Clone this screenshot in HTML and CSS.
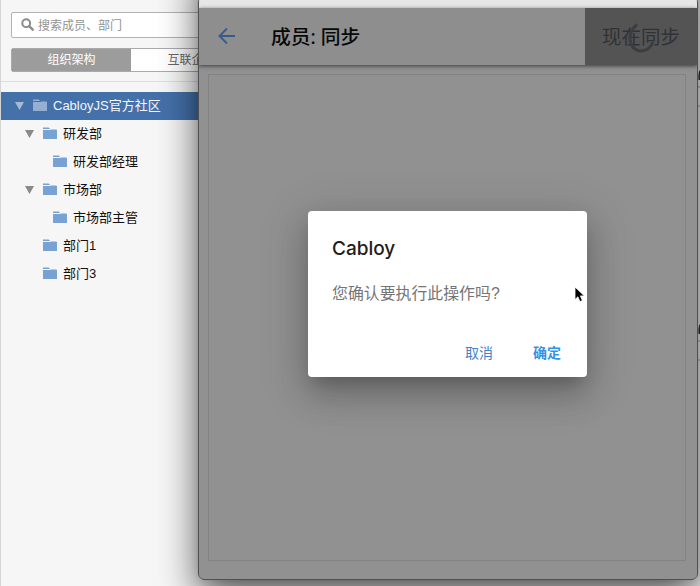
FILE: index.html
```html
<!DOCTYPE html>
<html lang="zh-CN">
<head>
<meta charset="utf-8">
<title>Cabloy</title>
<link rel="stylesheet" href="styles.css">
</head>
<body>
<svg class="defs" width="0" height="0">
  <symbol id="folder" viewBox="0 0 14 12"><path d="M0 .4h5.6l1.6 1.5H0zM0 3h7.2l1-.6H13q1 0 1 1V12H0z" fill="currentColor"/></symbol>
</svg>
<aside class="sidebar">
  <div class="search">
    <svg width="13" height="13" viewBox="0 0 13 13"><circle cx="5.2" cy="5.2" r="3.9" fill="none" stroke="#8b8b8b" stroke-width="2"/><path d="M8.2 8.2l3.5 3.5" stroke="#8b8b8b" stroke-width="2.4" stroke-linecap="round"/></svg>
    <span>搜索成员、部门</span>
  </div>
  <div class="tabs">
    <div class="tab active">组织架构</div>
    <div class="tab">互联企业</div>
  </div>
  <ul class="tree">
    <li class="root"><i class="arrow"></i><svg class="folder"><use href="#folder"/></svg><span>CabloyJS官方社区</span></li>
    <li class="level1"><i class="arrow"></i><svg class="folder"><use href="#folder"/></svg><span>研发部</span></li>
    <li class="level2"><svg class="folder"><use href="#folder"/></svg><span>研发部经理</span></li>
    <li class="level1"><i class="arrow"></i><svg class="folder"><use href="#folder"/></svg><span>市场部</span></li>
    <li class="level2"><svg class="folder"><use href="#folder"/></svg><span>市场部主管</span></li>
    <li class="leaf"><svg class="folder"><use href="#folder"/></svg><span>部门1</span></li>
    <li class="leaf"><svg class="folder"><use href="#folder"/></svg><span>部门3</span></li>
  </ul>
</aside>
<div class="edge"></div>
<svg class="peek" width="2" height="300" viewBox="0 0 2 300"><path d="M2 0Q0 2 .5 10H2zM2 254Q0 256 .5 264H2z" fill="#222"/><path d="M0 17h2M0 36h2M0 271h2M0 290h2" stroke="#666"/></svg>
<main class="window">
  <div class="titlebar"></div>
  <header class="navbar">
    <svg class="back" width="18" height="18" viewBox="0 0 18 18"><path d="M17 9H2M9 1.5L1.5 9 9 16.5" fill="none" stroke="#365c8a" stroke-width="1.8"/></svg>
    <h1>成员: 同步</h1>
    <button class="sync">现在同步
      <svg class="spinner" width="34" height="34" viewBox="0 0 34 34"><path d="M12 3.5Q4 10 5 19Q7 30 17 30Q25 29 28 21" fill="none" stroke="#3c3d3f" stroke-width="3"/></svg>
    </button>
  </header>
  <section class="content"><div class="card"></div></section>
</main>
<div class="dialog">
  <h2>Cabloy</h2>
  <p>您确认要执行此操作吗?</p>
  <div class="actions"><button>取消</button><button class="confirm">确定</button></div>
</div>
<svg class="cursor" width="12" height="18" viewBox="0 0 12 18"><path d="M1 1v12.5l2.9-2.7 2 4.8 2.5-1-2-4.7h4z" fill="#000" stroke="#fff" stroke-width=".8"/></svg>
</body>
</html>
```

FILE: styles.css
```css
* { box-sizing: border-box; }
body {
  margin: 0;
  position: relative;
  width: 700px;
  height: 586px;
  overflow: hidden;
  background: #f6f6f6;
  font-family: "Liberation Sans", "Noto Sans CJK SC", sans-serif;
  white-space: nowrap;
}
.defs { position: absolute; }
h1, h2, p, ul { margin: 0; padding: 0; }
button { padding: 0; border: 0; background: none; font: inherit; }
.sidebar { width: 262px; height: 586px; padding-top: 12px; border-left: 1px solid #d5d5d5; }
.search {
  display: flex;
  align-items: center;
  gap: 4px;
  height: 26px;
  margin-left: 10px;
  padding-left: 9px;
  border: 1px solid #b2b2b2;
  border-radius: 2px;
  background: #fff;
  color: #929292;
  font-size: 12px;
}
.search span { padding-bottom: 2px; }
.search svg { margin-bottom: 1px; }
.tabs {
  display: flex;
  height: 24px;
  margin: 10px 0 0 10px;
  border: 1px solid #aaa;
  border-radius: 2px;
  background: #fff;
}
.tab { flex: none; width: 121px; line-height: 23px; text-align: center; color: #686868; font-size: 12px; }
.tab.active { width: 119px; background: #9c9c9c; color: #fff; }
.tree { list-style: none; margin-top: 9px; padding-top: 10px; border-top: 1px solid #dedede; }
.tree li { display: flex; align-items: center; height: 28px; color: #111; font-size: 13px; }
.tree li span { padding-bottom: 4px; }
.tree .root span { padding-bottom: 3px; }
.tree .root { padding-left: 14px; background: #4471aa; color: #f3f6fa; }
.tree .level1 { padding-left: 24px; }
.tree .level2 { padding-left: 52px; }
.tree .leaf { padding-left: 42px; }
.arrow { width: 9px; height: 8px; margin-right: 9px; background: #898989; clip-path: polygon(0 0, 100% 0, 50% 100%); }
.root .arrow { background: #a5bad4; }
.folder { width: 14px; height: 12px; margin: 0 6px 2px 0; color: #78a2d3; }
.root .folder { color: #95afd2; }
.window {
  position: absolute;
  left: 198px;
  top: -4px;
  width: 500px;
  height: 584px;
  overflow: hidden;
  display: flex;
  flex-direction: column;
  border: 1px solid #505050;
  border-radius: 6px;
  background: #919191;
}
.edge {
  position: absolute;
  left: 198px;
  top: -40px;
  width: 500px;
  height: 620px;
  border-radius: 6px;
  box-shadow: 0 16px 38px rgba(0, 0, 0, .66), 0 0 6px rgba(0, 0, 0, .1);
}
.peek { position: absolute; left: 698px; top: 70px; }
.titlebar { flex: none; height: 11px; background: #e6e6e6; }
.navbar {
  flex: none;
  display: flex;
  align-items: center;
  height: 57px;
  padding-left: 19px;
  background: #8e8e8e;
  box-shadow: 0 1px 4px rgba(0, 0, 0, .6);
}
.back { margin-bottom: 2px; }
.navbar h1 { flex: 1; margin: 0 0 2px 35px; font-size: 19.8px; font-weight: 500; color: #080808; font-family: Roboto, "Noto Sans CJK SC", sans-serif; }
.sync { position: relative; width: 112px; height: 57px; padding-bottom: 2px; background: #545454; color: #303236; font-size: 19.5px; }
.spinner { position: absolute; left: 40px; top: 13px; }
.content { flex: 1; padding: 9px 11px 18px 9px; }
.card { height: 100%; border: 1px solid #838383; }
.dialog {
  position: absolute;
  left: 308px;
  top: 211px;
  width: 279px;
  height: 166px;
  padding: 25px 24px 0;
  border-radius: 4px;
  background: #fff;
  box-shadow: 0 11px 15px -7px rgba(0, 0, 0, .2), 0 18px 32px 2px rgba(0, 0, 0, .16), 0 9px 46px 8px rgba(0, 0, 0, .12);
}
.dialog h2 { font: 500 19px/26px Inter, sans-serif; color: #202020; }
.dialog p { margin-top: 20px; line-height: 24px; font-size: 15.9px; color: #757575; }
.actions { display: flex; justify-content: flex-end; gap: 40px; margin-top: 35px; padding-right: 2px; font-size: 14px; line-height: 24px; }
.actions button { color: #3f82c7; }
.actions .confirm { font-weight: 700; color: #3393e4; }
.cursor { position: absolute; left: 574px; top: 286px; }
```
